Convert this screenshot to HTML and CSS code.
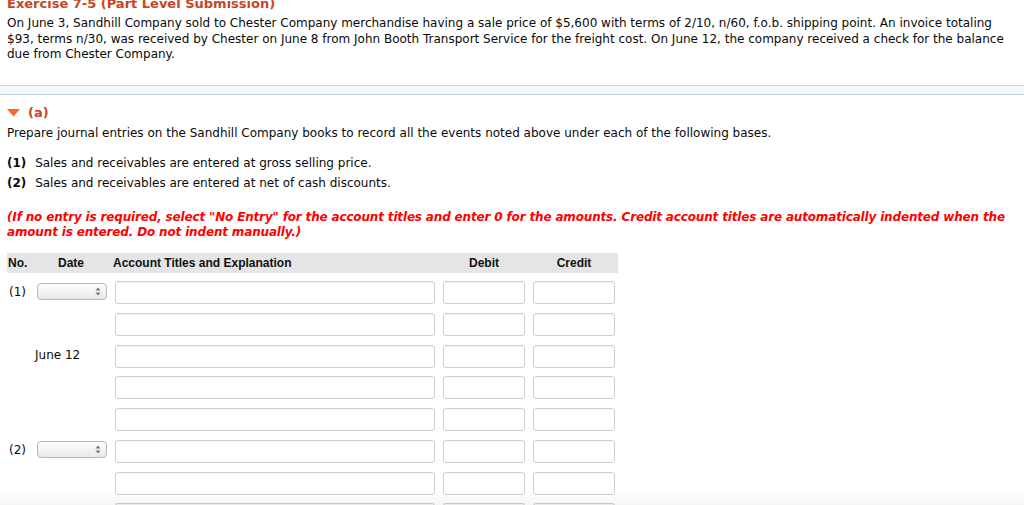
FILE: index.html
```html
<!DOCTYPE html>
<html lang="en">
<head>
<meta charset="utf-8">
<title>Exercise 7-5</title>
<link rel="stylesheet" href="styles.css">
</head>
<body>
<div class="page">
  <div class="wrap">
    <h1 class="title">Exercise 7-5 (Part Level Submission)</h1>
    <p class="intro">On June 3, Sandhill Company sold to Chester Company merchandise having a sale price of $5,600 with terms of 2/10, n/60, f.o.b. shipping point. An invoice totaling $93, terms n/30, was received by Chester on June 8 from John Booth Transport Service for the freight cost. On June 12, the company received a check for the balance due from Chester Company.</p>
  </div>
  <div class="divider"></div>
  <div class="wrap">
    <div class="part-head">
      <svg class="caret" width="13" height="8" viewBox="0 0 13 8"><polygon points="0,0 13,0 6.5,7.5" fill="#f26b22"/></svg>
      <span class="part-label">(a)</span>
    </div>
    <p class="prompt">Prepare journal entries on the Sandhill Company books to record all the events noted above under each of the following bases.</p>
    <ol class="bases">
      <li><b class="num">(1)</b> Sales and receivables are entered at gross selling price.</li>
      <li><b class="num">(2)</b> Sales and receivables are entered at net of cash discounts.</li>
    </ol>
    <p class="note">(If no entry is required, select "No Entry" for the account titles and enter 0 for the amounts. Credit account titles are automatically indented when the amount is entered. Do not indent manually.)</p>

    <div class="journal">
      <div class="jhead">
        <span class="h-no">No.</span>
        <span class="h-date">Date</span>
        <span class="h-acct">Account Titles and Explanation</span>
        <span class="h-amt debit">Debit</span>
        <span class="h-amt credit">Credit</span>
      </div>
      <div class="jrow">
        <span class="no">(1)</span>
        <span class="date"><span class="select"><svg width="6" height="9" viewBox="0 0 6 9"><polygon points="3,0.5 5.5,3.5 0.5,3.5" fill="#777"/><polygon points="0.5,5.5 5.5,5.5 3,8.5" fill="#777"/></svg></span></span>
        <span class="field acct"></span><span class="field debit"></span><span class="field credit"></span>
      </div>
      <div class="jrow">
        <span class="no"></span><span class="date"></span>
        <span class="field acct"></span><span class="field debit"></span><span class="field credit"></span>
      </div>
      <div class="jrow">
        <span class="no"></span><span class="date text">June 12</span>
        <span class="field acct"></span><span class="field debit"></span><span class="field credit"></span>
      </div>
      <div class="jrow">
        <span class="no"></span><span class="date"></span>
        <span class="field acct"></span><span class="field debit"></span><span class="field credit"></span>
      </div>
      <div class="jrow">
        <span class="no"></span><span class="date"></span>
        <span class="field acct"></span><span class="field debit"></span><span class="field credit"></span>
      </div>
      <div class="jrow">
        <span class="no">(2)</span>
        <span class="date"><span class="select"><svg width="6" height="9" viewBox="0 0 6 9"><polygon points="3,0.5 5.5,3.5 0.5,3.5" fill="#777"/><polygon points="0.5,5.5 5.5,5.5 3,8.5" fill="#777"/></svg></span></span>
        <span class="field acct"></span><span class="field debit"></span><span class="field credit"></span>
      </div>
      <div class="jrow">
        <span class="no"></span><span class="date"></span>
        <span class="field acct"></span><span class="field debit"></span><span class="field credit"></span>
      </div>
      <div class="jrow">
        <span class="no"></span><span class="date"></span>
        <span class="field acct"></span><span class="field debit"></span><span class="field credit"></span>
      </div>
    </div>
  </div>
</div>
<div class="fade"></div>
</body>
</html>
```

FILE: styles.css
```css
html, body {
  margin: 0;
  padding: 0;
  background: #fff;
  overflow: hidden;
}
body {
  font-family: "DejaVu Sans", Verdana, sans-serif;
  font-size: 12px;
  color: #0a0a0a;
}
.page {
  width: 1024px;
}
.wrap {
  padding: 0 7px;
}
.title {
  margin: -4px 0 0;
  height: 16px;
  line-height: 16px;
  font-size: 13px;
  font-weight: bold;
  color: #c8461f;
}
.intro {
  margin: 4px 0 0;
  line-height: 15.5px;
}
.divider {
  margin-top: 22px;
  height: 8px;
  background: #f5f8fc;
  border-top: 1px solid #c9d2e0;
  border-bottom: 1px solid #c3cbd3;
}
.part-head {
  margin-top: 10px;
  height: 16px;
  display: flex;
  align-items: center;
}
.caret {
  display: block;
  margin-right: 8px;
}
.part-label {
  font-size: 13px;
  font-weight: bold;
  color: #c8461f;
}
.prompt {
  margin: 4px 0 0;
  line-height: 16px;
}
.bases {
  list-style: none;
  margin: 12px 0 0;
  padding: 0;
}
.bases li {
  line-height: 20px;
}
.num {
  margin-right: 5px;
}
.note {
  margin: 17.5px 0 0;
  line-height: 15px;
  color: #f00;
  font-weight: bold;
  font-style: italic;
  letter-spacing: -0.16px;
}
.journal {
  margin-top: 13px;
  width: 611px;
}
.jhead,
.jrow {
  display: grid;
  grid-template-columns: 30px 78px 320px 8px 82px 8px 82px;
  grid-template-areas: "no date acct . d . c";
  align-items: center;
}
.jhead {
  height: 20px;
  background: #e5e5e5;
  font-family: "Liberation Sans", Arial, sans-serif;
  font-weight: bold;
  font-size: 12px;
  color: #111;
}
.h-no { grid-area: no; padding-left: 1px; }
.h-date { grid-area: date; padding-left: 21px; }
.h-acct { grid-area: acct; margin-left: -2px; }
.h-amt { text-align: center; }
.jrow {
  height: 23px;
  margin-top: 8.75px;
}
.jhead + .jrow { margin-top: 8px; }
.no { grid-area: no; padding-left: 2px; margin-top: -2px; }
.date { grid-area: date; }
.date.text { margin-left: -2px; margin-top: -2px; }
.field {
  display: block;
  height: 23px;
  box-sizing: border-box;
  border: 1px solid #cfcfcf;
  border-radius: 3px;
  background: #fff;
  box-shadow: inset 0 1px 1px rgba(0,0,0,0.04);
}
.acct { grid-area: acct; }
.debit { grid-area: d; }
.credit { grid-area: c; }
.select {
  display: flex;
  align-items: center;
  justify-content: flex-end;
  box-sizing: border-box;
  width: 70px;
  height: 17px;
  margin-top: -3px;
  padding-right: 5px;
  border: 1px solid #b9b9b9;
  border-radius: 4px;
  background: linear-gradient(#fdfdfd, #e9e9e9);
}
.select svg { display: block; }
.fade {
  position: fixed;
  left: 0;
  right: 0;
  bottom: 0;
  height: 13px;
  background: linear-gradient(rgba(0,0,0,0), rgba(0,0,0,0.045));
  pointer-events: none;
}
```
